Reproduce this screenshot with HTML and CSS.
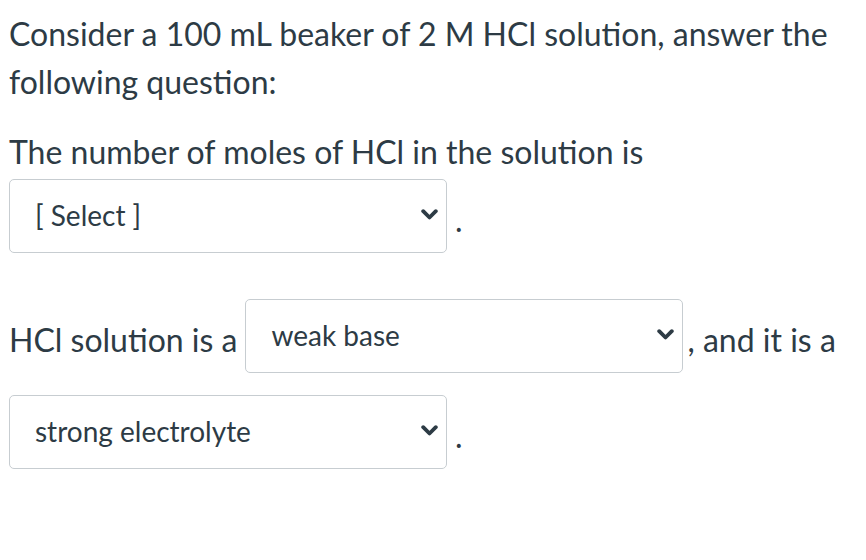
FILE: index.html
```html
<!DOCTYPE html>
<html lang="en">
<head>
<meta charset="utf-8">
<title>Question</title>
<link rel="stylesheet" href="styles.css">
</head>
<body>
<div class="question">
  <p class="intro">Consider a 100 mL beaker of 2 M HCl solution, answer the following question:</p>
  <div class="part">
    <div class="line">The number of moles of HCl in the solution is</div>
    <div class="row row-first">
      <span class="select"><span class="value">[ Select ]</span><svg class="chev" width="17" height="11" viewBox="0 0 17 11"><path d="M2.2 2.2 L8.5 8.5 L14.8 2.2" fill="none" stroke="#2d3b45" stroke-width="3.8" stroke-linecap="round" stroke-linejoin="round"/></svg></span>
      <span class="text dot">.</span>
    </div>
    <div class="row row-second">
      <span class="text lead">HCl solution is a</span>
      <span class="select"><span class="value">weak base</span><svg class="chev" width="17" height="11" viewBox="0 0 17 11"><path d="M2.2 2.2 L8.5 8.5 L14.8 2.2" fill="none" stroke="#2d3b45" stroke-width="3.8" stroke-linecap="round" stroke-linejoin="round"/></svg></span>
      <span class="text tail">, and it is a</span>
    </div>
    <div class="row row-third">
      <span class="select"><span class="value">strong electrolyte</span><svg class="chev" width="17" height="11" viewBox="0 0 17 11"><path d="M2.2 2.2 L8.5 8.5 L14.8 2.2" fill="none" stroke="#2d3b45" stroke-width="3.8" stroke-linecap="round" stroke-linejoin="round"/></svg></span>
      <span class="text dot">.</span>
    </div>
  </div>
</div>
</body>
</html>
```

FILE: styles.css
```css
html, body {
  margin: 0;
  padding: 0;
  background: #ffffff;
}

body {
  font-family: Lato, "Open Sans", sans-serif;
  color: #2d3b45;
  font-size: 32px;
  line-height: 48px;
}

.question {
  padding: 10px 9px 0 9px;
}

.intro {
  margin: 0;
}

.part {
  margin-top: 22px;
}

.line {
  white-space: nowrap;
}

.row {
  display: flex;
  align-items: flex-start;
}

.row-first {
  margin-top: 3px;
}

.row-second {
  margin-top: 46px;
}

.row-third {
  margin-top: 22px;
}

.text {
  margin-top: 17px;
  white-space: nowrap;
}

.dot {
  margin-left: 8px;
}

.lead {
  margin-right: 8px;
}

.tail {
  margin-left: 4px;
}

.select {
  box-sizing: border-box;
  width: 438px;
  height: 74px;
  border: 1px solid #c7cdd1;
  border-radius: 5px;
  background: #ffffff;
  display: flex;
  align-items: flex-start;
  justify-content: space-between;
  padding: 0 8px 0 25px;
}

.value {
  font-size: 28px;
  line-height: 34px;
  margin-top: 18px;
  white-space: nowrap;
}

.chev {
  display: block;
  margin-top: 29px;
}
```
